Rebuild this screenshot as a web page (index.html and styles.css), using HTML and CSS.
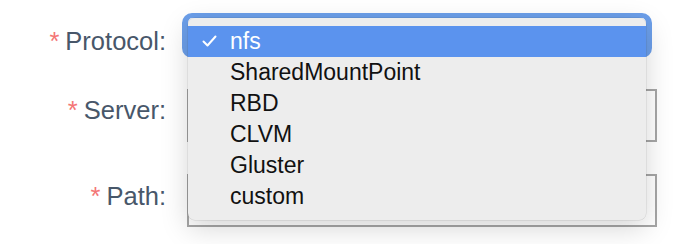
FILE: index.html
```html
<!DOCTYPE html>
<html>
<head>
<meta charset="utf-8">
<link rel="stylesheet" href="styles.css">
</head>
<body>
<div class="form">
  <div class="row row-protocol">
    <label class="label req">Protocol:</label>
    <div class="select">
      <div class="menu">
        <div class="item selected">
          <svg class="check" width="15" height="12" viewBox="0 0 15 12"><polyline points="1.5,6.5 5.5,10.5 13.5,1.5" fill="none" stroke="#fff" stroke-width="2" stroke-linecap="round" stroke-linejoin="round"/></svg>
          <span>nfs</span>
        </div>
        <div class="item"><span>SharedMountPoint</span></div>
        <div class="item"><span>RBD</span></div>
        <div class="item"><span>CLVM</span></div>
        <div class="item"><span>Gluster</span></div>
        <div class="item"><span>custom</span></div>
      </div>
    </div>
  </div>
  <div class="row row-server">
    <label class="label req">Server:</label>
    <div class="input"></div>
  </div>
  <div class="row row-path">
    <label class="label req">Path:</label>
    <div class="input"></div>
  </div>
</div>
</body>
</html>
```

FILE: styles.css
```css
html, body {
  margin: 0;
  padding: 0;
  background: #fff;
}
body {
  font-family: "Liberation Sans", Arial, sans-serif;
  width: 700px;
  height: 244px;
  overflow: hidden;
}
.form {
  padding-top: 13px;
  display: flex;
  flex-direction: column;
}
.row {
  display: flex;
  align-items: flex-start;
}
.label {
  width: 187px;
  box-sizing: border-box;
  padding-right: 21px;
  text-align: right;
  font-size: 25.5px;
  line-height: 30px;
  color: #48576a;
  flex: none;
}
.req::before {
  content: "*";
  color: #f47676;
  margin-right: 6px;
}
.row-protocol .label { margin-top: 13px; }
.row-server { margin-top: 31px; }
.row-server .label { margin-top: 6px; }
.row-path { margin-top: 32px; }
.row-path .label { margin-top: 7px; }

.select {
  position: relative;
  margin-left: -5px;
  width: 470px;
  height: 45px;
  box-sizing: border-box;
  border: 6px solid #6c9fea;
  border-top-width: 5px;
  border-radius: 10px;
  background: #fff;
}
.input {
  width: 470px;
  height: 53px;
  box-sizing: border-box;
  border: 2px solid #a6a6a6;
  background: #fff;
}
.menu {
  position: absolute;
  top: 0;
  left: 0;
  width: 458px;
  height: 202px;
  box-sizing: border-box;
  padding: 8px 0;
  background: #ededed;
  border-radius: 7px;
  box-shadow: 0 0 0 0.5px rgba(0,0,0,0.12), 0 8px 28px rgba(0,0,0,0.17);
  z-index: 2;
  overflow: hidden;
}
.item {
  position: relative;
  height: 31px;
  line-height: 31px;
  padding-left: 42px;
  font-size: 23px;
  color: #111;
}
.item.selected {
  background: #5b93ee;
  color: #fff;
}
.check {
  position: absolute;
  left: 14px;
  top: 9px;
}
```
